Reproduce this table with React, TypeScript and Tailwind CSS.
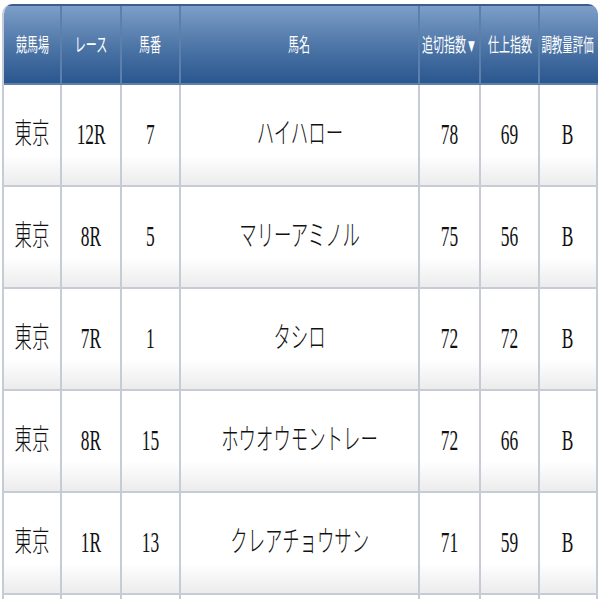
const rows = [
  { place: "東京", race: "12R", num: "7", name: "ハイハロー", a: "78", b: "69", c: "B" },
  { place: "東京", race: "8R", num: "5", name: "マリーアミノル", a: "75", b: "56", c: "B" },
  { place: "東京", race: "7R", num: "1", name: "タシロ", a: "72", b: "72", c: "B" },
  { place: "東京", race: "8R", num: "15", name: "ホウオウモントレー", a: "72", b: "66", c: "B" },
  { place: "東京", race: "1R", num: "13", name: "クレアチョウサン", a: "71", b: "59", c: "B" },
];

const heads = ["競馬場", "レース", "馬番", "馬名", "追切指数▼", "仕上指数", "調教量評価"];

const font = { fontFamily: '"Liberation Serif", "Noto Sans CJK JP", serif' };
const cols = "grid grid-cols-[58px_60px_59px_239px_61px_59px_58px]";

function Narrow({ children, className = "scale-x-[0.6]" }: { children: React.ReactNode; className?: string }) {
  return <span className={`inline-block whitespace-nowrap shrink-0 ${className}`}>{children}</span>;
}

export default function App() {
  return (
    <div className="w-[599px] h-[599px] overflow-hidden bg-white pt-[4px] pl-[2px]" style={font}>
      <div className="w-[596px] rounded-t-[10px] overflow-hidden border-l-2 border-[#c5ccd6]">
        <div className={`${cols} h-[81px] bg-linear-to-b from-[#7d9ec8] via-[#4f77a8] to-[#2a578f] border-t-2 border-t-[#3b5f8c] border-b-2 border-b-[#5f80ab]`}>
          {heads.map((h, i) => (
            <div
              key={h}
              className={`flex items-center justify-center pt-[3px] text-white text-[19px] ${i < 6 ? "border-r-2 border-[#5d7fab]" : ""}`}
            >
              <Narrow className={i === 6 ? "scale-x-[0.55] -translate-x-[2px]" : "scale-x-[0.58]"}>{h}</Narrow>
            </div>
          ))}
        </div>
        {rows.map((r, i) => (
          <div
            key={i}
            className={`${cols} h-[102px] bg-linear-to-b from-white from-70% to-[#ececec] border-b-2 border-[#c5ccd6]`}
          >
            {[r.place, r.race, r.num, r.name, r.a, r.b, r.c].map((v, j) => (
              <div
                key={j}
                className="flex items-center justify-center text-[#111] text-[29px] border-r-2 border-[#c5ccd6] font-light"
              >
                <Narrow>{v}</Narrow>
              </div>
            ))}
          </div>
        ))}
        <div className={`${cols} h-[20px]`}>
          {heads.map((h) => (
            <div key={h} className="border-r-2 border-[#c5ccd6]" />
          ))}
        </div>
      </div>
    </div>
  );
}
